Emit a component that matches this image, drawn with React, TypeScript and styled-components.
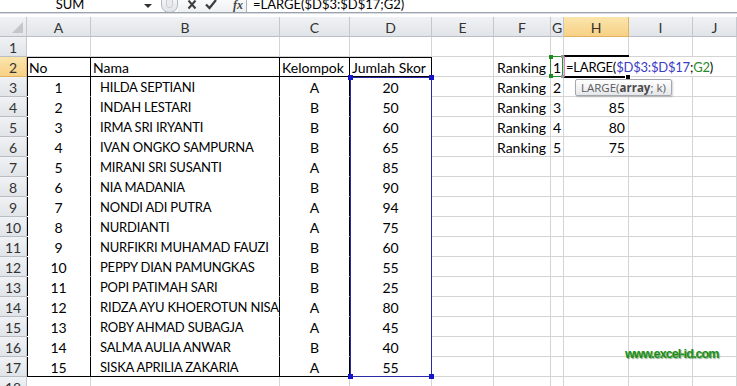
import React from "react";
import styled, { createGlobalStyle } from "styled-components";

const GRID = "#d4d4d4";
const FONT = `Lato, "Liberation Sans", Arial, sans-serif`;

const GlobalStyle = createGlobalStyle`
  html, body {
    margin: 0;
    padding: 0;
    background: #fff;
    overflow: hidden;
  }
  body {
    width: 737px;
    height: 386px;
    font-family: ${FONT};
  }
`;

// Formula bar
const FormulaBar = styled.div`
  display: flex;
  align-items: flex-end;
  height: 13px;
  box-sizing: border-box;
  border-bottom: 1px solid #9aa3ad;
  overflow: hidden;
`;

const NameBox = styled.div`
  position: relative;
  width: 160px;
  height: 100%;
  display: flex;
  align-items: flex-end;
  justify-content: center;
  padding-right: 20px;
  box-sizing: border-box;
  font-size: 13px;
  line-height: 15px;
  color: #000;
`;

const DropArrow = styled.span`
  position: absolute;
  right: 8px;
  bottom: 4px;
  width: 0;
  height: 0;
  border-left: 4px solid transparent;
  border-right: 4px solid transparent;
  border-top: 4px solid #333;
`;

const Splitter = styled.div`
  width: 18px;
  height: 100%;
  position: relative;
  &::before {
    content: "";
    position: absolute;
    left: 1px;
    top: -9px;
    width: 15px;
    height: 20px;
    border-radius: 8px;
    border: 1px solid #b3b9c1;
    background: linear-gradient(#ffffff, #dfe3e8);
  }
  &::after {
    content: "";
    position: absolute;
    left: 6px;
    top: -4px;
    width: 5px;
    height: 10px;
    border-radius: 3px;
    background: #e9ecef;
    border: 1px solid #c9ced4;
  }
`;

const Buttons = styled.div`
  width: 68px;
  height: 100%;
  display: flex;
  align-items: flex-end;
  gap: 8px;
  padding: 0 0 2px 9px;
  box-sizing: border-box;
  background: linear-gradient(#fbfbfc, #eef0f2);
`;

const Fx = styled.span`
  font-family: "Liberation Serif", serif;
  font-style: italic;
  font-weight: bold;
  font-size: 12px;
  line-height: 12px;
  color: #444;
  margin-left: 8px;
  margin-bottom: -1px;
`;

const FormulaInput = styled.div`
  flex: 1;
  height: 100%;
  display: flex;
  align-items: flex-end;
  padding-left: 6px;
  border-left: 1px solid #a9b1ba;
  font-size: 13px;
  line-height: 15px;
  color: #000;
  white-space: nowrap;
`;

const Spacer = styled.div`
  height: 4px;
  border-top: 1px solid #d9dde2;
  box-sizing: border-box;
`;

// Sheet
const Sheet = styled.div`
  position: relative;
  display: grid;
  grid-template-columns: 27px 64px 189px 70px 82px 62px 57px 13px 65px 64px 1fr;
  grid-auto-rows: 20px;
`;

const Head = styled.div<{ $c: number; $r: number; $active?: boolean }>`
  grid-column: ${(p) => p.$c};
  grid-row: ${(p) => p.$r};
  box-sizing: border-box;
  display: flex;
  align-items: center;
  justify-content: center;
  padding-top: 1px;
  font-size: 14px;
  color: #333;
  background: ${(p) =>
    p.$active
      ? "linear-gradient(#fbe5ad, #f7d185)"
      : "linear-gradient(#f0f2f5, #e1e4e8)"};
  border-right: 1px solid ${(p) => (p.$active ? "#e0b261" : "#c4c9cf")};
  border-bottom: 1px solid ${(p) => (p.$active ? "#e0b261" : "#b9bec5")};
`;

const Corner = styled(Head)`
  position: relative;
  svg {
    position: absolute;
    right: 3px;
    bottom: 3px;
  }
`;

type Align = "left" | "center" | "right";

const Cell = styled.div<{
  $c: number;
  $r: number;
  $span?: number;
  $align?: Align;
  $pad?: number;
  $right?: string;
  $bottom?: string;
  $edgeLeft?: boolean;
  $edgeTop?: boolean;
  $paper?: boolean;
}>`
  grid-column: ${(p) => p.$c} / span ${(p) => p.$span ?? 1};
  grid-row: ${(p) => p.$r};
  box-sizing: border-box;
  display: flex;
  align-items: center;
  justify-content: ${(p) =>
    p.$align === "center" ? "center" : p.$align === "right" ? "flex-end" : "flex-start"};
  padding: 1px ${(p) => p.$pad ?? 2}px 0;
  border-right: 1px solid ${(p) => p.$right ?? GRID};
  border-bottom: 1px solid ${(p) => p.$bottom ?? GRID};
  box-shadow: ${(p) =>
    [p.$edgeLeft && "inset 1px 0 0 #000", p.$edgeTop && "inset 0 1px 0 #000"]
      .filter(Boolean)
      .join(", ") || "none"};
  background: ${(p) => (p.$paper ? "#fff" : "transparent")};
  font-size: 14px;
  color: #000;
  white-space: nowrap;
  overflow: hidden;
`;

// Calibri capitals run narrower than Lato's, so names get a tighter set
const Name = styled.span`
  padding-left: 7px;
  font-size: 13px;
  letter-spacing: -0.2px;
`;

const Formula = styled.span`
  font-size: 13px;
  letter-spacing: -0.2px;
`;

const Ref = styled.span<{ $tone: "blue" | "green" }>`
  color: ${(p) => (p.$tone === "blue" ? "#3b3bc4" : "#2a8a2a")};
`;

// Overlays
const RangeBox = styled.div<{ $c: string; $r: string; $tone: string }>`
  grid-column: ${(p) => p.$c};
  grid-row: ${(p) => p.$r};
  position: relative;
  z-index: 2;
  box-sizing: border-box;
  border: 1px solid ${(p) => p.$tone};
  pointer-events: none;
`;

const GreenRange = styled(RangeBox)`
  margin: -1px 1px 0 -1px;
`;

const Knob = styled.span<{ $x: "l" | "r"; $y: "t" | "b"; $tone: string; $size: number }>`
  position: absolute;
  width: ${(p) => p.$size}px;
  height: ${(p) => p.$size}px;
  background: ${(p) => p.$tone};
  ${(p) => (p.$x === "l" ? "left" : "right")}: -${(p) => Math.ceil(p.$size / 2)}px;
  ${(p) => (p.$y === "t" ? "top" : "bottom")}: -${(p) => Math.ceil(p.$size / 2)}px;
`;

const EditBox = styled.div`
  grid-column: 9;
  grid-row: 3;
  position: relative;
  z-index: 3;
  margin: -2px 0 -1px 0;
  border-top: 2px solid #000;
  border-bottom: 2px solid #000;
  border-left: 1px solid #e37ccf;
  pointer-events: none;
`;

const FillHandle = styled.span`
  position: absolute;
  right: -2px;
  bottom: -4px;
  width: 4px;
  height: 4px;
  background: #000;
  border: 1px solid #fff;
`;

const Tooltip = styled.div`
  position: absolute;
  left: 575px;
  top: 62px;
  z-index: 4;
  height: 17px;
  box-sizing: border-box;
  padding: 0 5px;
  display: flex;
  align-items: center;
  border: 1px solid #a5a9ae;
  border-radius: 2px;
  background: linear-gradient(#ffffff, #e6e7eb);
  box-shadow: 1px 1px 2px rgba(0, 0, 0, 0.18);
  font-family: "Open Sans", ${FONT};
  font-size: 11.5px;
  color: #5b5b5b;
  white-space: nowrap;
  b {
    font-weight: 700;
    color: #4a4a4a;
  }
`;

const Watermark = styled.div`
  position: absolute;
  left: 625px;
  top: 330px;
  z-index: 4;
  font-family: "Liberation Sans", Arial, sans-serif;
  font-weight: 700;
  font-size: 12.5px;
  letter-spacing: -0.9px;
  color: #1b901b;
  text-shadow: 1px 1px 1px rgba(0, 70, 0, 0.45);
`;

const people: [string, string, number][] = [
  ["HILDA SEPTIANI", "A", 20],
  ["INDAH LESTARI", "B", 50],
  ["IRMA SRI IRYANTI", "B", 60],
  ["IVAN ONGKO SAMPURNA", "B", 65],
  ["MIRANI SRI SUSANTI", "A", 85],
  ["NIA MADANIA", "B", 90],
  ["NONDI ADI PUTRA", "A", 94],
  ["NURDIANTI", "A", 75],
  ["NURFIKRI MUHAMAD FAUZI", "B", 60],
  ["PEPPY DIAN PAMUNGKAS", "B", 55],
  ["POPI PATIMAH SARI", "B", 25],
  ["RIDZA AYU KHOEROTUN NISA", "A", 80],
  ["ROBY AHMAD SUBAGJA", "A", 45],
  ["SALMA AULIA ANWAR", "B", 40],
  ["SISKA APRILIA ZAKARIA", "A", 55],
];

// H3 sits under the tooltip, so it is left blank
const rankValues = ["", "", "85", "80", "75"];
const letters = ["A", "B", "C", "D", "E", "F", "G", "H", "I", "J"];

type CellSpec = {
  text?: React.ReactNode;
  align?: Align;
  pad?: number;
  span?: number;
  paper?: boolean;
};

function contentOf(r: number, c: number): CellSpec | null {
  if (r === 2 && c < 4) {
    return { text: ["No", "Nama", "Kelompok", "Jumlah Skor"][c], pad: 2 };
  }
  if (r >= 3 && r <= 17 && c < 4) {
    const [name, group, score] = people[r - 3];
    if (c === 0) return { text: r - 2, align: "center" };
    if (c === 1) return { text: <Name>{name}</Name> };
    if (c === 2) return { text: group, align: "center" };
    return { text: score, align: "center" };
  }
  if (r >= 2 && r <= 6) {
    if (c === 5) return { text: "Ranking", pad: 3 };
    if (c === 6) return { text: r - 1, pad: 2 };
    if (c === 7 && r === 2) {
      return {
        span: 3,
        paper: true,
        pad: 2,
        text: (
          <Formula>
            =LARGE(<Ref $tone="blue">$D$3:$D$17</Ref>;<Ref $tone="green">G2</Ref>)
          </Formula>
        ),
      };
    }
    if (c === 7) return { text: rankValues[r - 2], align: "right", pad: 3 };
    if ((c === 8 || c === 9) && r === 2) return null;
  }
  return {};
}

const CrossIcon = () => (
  <svg width="10" height="11" viewBox="0 0 10 11">
    <path d="M1.5 1.5 L8.5 9.5 M8.5 1.5 L1.5 9.5" stroke="#3d3d3d" strokeWidth="2" />
  </svg>
);

const CheckIcon = () => (
  <svg width="12" height="11" viewBox="0 0 12 11">
    <path d="M1 5.5 L4.5 9 L11 1" stroke="#3d3d3d" strokeWidth="2.2" fill="none" />
  </svg>
);

export default function App() {
  const cells: React.ReactNode[] = [];

  for (let r = 1; r <= 18; r++) {
    cells.push(
      <Head key={`h${r}`} $c={1} $r={r + 1} $active={r === 2}>
        {r}
      </Head>
    );
    for (let c = 0; c < 10; c++) {
      const spec = contentOf(r, c);
      if (!spec) continue;
      const inTable = r >= 2 && r <= 17 && c < 4;
      cells.push(
        <Cell
          key={`${letters[c]}${r}`}
          $c={c + 2}
          $r={r + 1}
          $span={spec.span}
          $align={spec.align}
          $pad={spec.pad}
          $paper={spec.paper || inTable}
          $right={inTable ? "#000" : undefined}
          $bottom={inTable ? (r === 2 || r === 17 ? "#000" : "#fff") : undefined}
          $edgeLeft={inTable && c === 0}
          $edgeTop={inTable && r === 2}
        >
          {spec.text}
        </Cell>
      );
    }
  }

  return (
    <>
      <GlobalStyle />
      <FormulaBar>
        <NameBox>
          SUM
          <DropArrow />
        </NameBox>
        <Splitter />
        <Buttons>
          <CrossIcon />
          <CheckIcon />
          <Fx>fx</Fx>
        </Buttons>
        <FormulaInput>=LARGE($D$3:$D$17;G2)</FormulaInput>
      </FormulaBar>
      <Spacer />
      <Sheet>
        <Corner $c={1} $r={1}>
          <svg width="11" height="11" viewBox="0 0 11 11">
            <path d="M11 0 L11 11 L0 11 Z" fill="#c3c7cc" />
          </svg>
        </Corner>
        {letters.map((l, i) => (
          <Head key={l} $c={i + 2} $r={1} $active={l === "H"}>
            {l}
          </Head>
        ))}
        {cells}

        <RangeBox $c="5" $r="4 / 19" $tone="#2a2aa6">
          <Knob $x="l" $y="t" $tone="#1414c8" $size={5} />
          <Knob $x="r" $y="t" $tone="#1414c8" $size={5} />
          <Knob $x="l" $y="b" $tone="#1414c8" $size={5} />
          <Knob $x="r" $y="b" $tone="#1414c8" $size={5} />
        </RangeBox>

        <GreenRange $c="8" $r="3" $tone="#2f8f2f">
          <Knob $x="l" $y="t" $tone="#1e8a1e" $size={4} />
          <Knob $x="l" $y="b" $tone="#1e8a1e" $size={4} />
          <Knob $x="r" $y="t" $tone="#9a9a9a" $size={3} />
          <Knob $x="r" $y="b" $tone="#9a9a9a" $size={3} />
        </GreenRange>

        <EditBox>
          <FillHandle />
        </EditBox>

        <Tooltip>
          LARGE(<b>array</b>; k)
        </Tooltip>

        <Watermark>www.excel-id.com</Watermark>
      </Sheet>
    </>
  );
}
